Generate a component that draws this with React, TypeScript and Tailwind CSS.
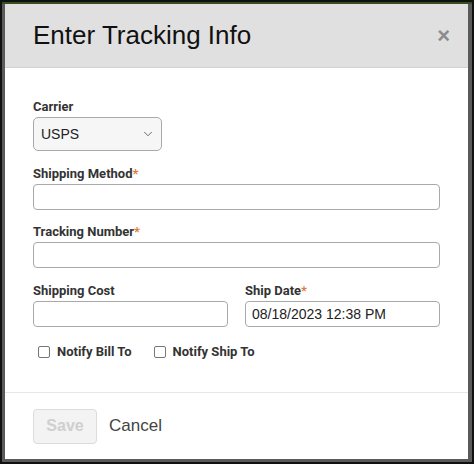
import { ChevronDown } from "lucide-react";

const label = "block text-[13px] font-bold text-[#333] leading-4 mb-[2px]";
const input =
  "block h-[26px] w-full rounded-[4px] border border-[#a9a9a9] bg-white px-[6px] text-[14px] text-[#222]";

function Req() {
  return <span className="text-[#e07b39]">*</span>;
}

export default function App() {
  return (
    <div className="h-[464px] w-[474px] bg-[#111] p-[2px] font-['Liberation_Sans',Arial,sans-serif]">
      <div className="flex h-full flex-col border-t-[2px] border-t-[#33501f] bg-[#5a5a5a] pb-[3px] pl-[3px] pr-[4px]">
        <div className="flex flex-1 flex-col bg-white">
          {/* Header */}
          <div className="flex h-[64px] items-center justify-between border-b border-[#d2d2d2] bg-[#e0e0e0] pl-[28px] pr-[18px]">
            <h1 className="text-[26px] font-normal text-[#111]">Enter Tracking Info</h1>
            <span className="text-[22px] font-bold leading-none text-[#8c8c8c]">×</span>
          </div>

          {/* Body */}
          <div className="flex flex-col px-[28px] pt-[31px] font-['Roboto',sans-serif]">
            <label className={label}>Carrier</label>
            <div className="flex h-[34px] w-[129px] items-center justify-between rounded-[5px] border border-[#a9a9a9] bg-[#f6f6f6] pl-[7px] pr-[6px]">
              <span className="font-['Liberation_Sans',Arial,sans-serif] text-[14px] text-[#222]">USPS</span>
              <ChevronDown className="h-[14px] w-[14px] text-[#555]" strokeWidth={1.5} />
            </div>

            <label className={`${label} mt-[15px]`}>
              Shipping Method<Req />
            </label>
            <div className={input} />

            <label className={`${label} mt-[14px]`}>
              Tracking Number<Req />
            </label>
            <div className={input} />

            <div className="mt-[15px] flex gap-[17px]">
              <div className="flex-1">
                <label className={label}>Shipping Cost</label>
                <div className={input} />
              </div>
              <div className="flex-1">
                <label className={label}>
                  Ship Date<Req />
                </label>
                <div className={`${input} flex items-center font-['Liberation_Sans',Arial,sans-serif]`}>
                  08/18/2023 12:38 PM
                </div>
              </div>
            </div>

            <div className="mt-[17px] flex h-4 items-center pl-[5px] text-[13px] font-bold text-[#333]">
              <span className="h-[12px] w-[12px] rounded-[2px] border border-[#777] bg-white" />
              <span className="ml-[7px]">Notify Bill To</span>
              <span className="ml-[22px] h-[12px] w-[12px] rounded-[2px] border border-[#777] bg-white" />
              <span className="ml-[7px]">Notify Ship To</span>
            </div>
          </div>

          {/* Footer */}
          <div className="mt-auto flex h-[67px] items-center gap-[12px] border-t border-[#e6e6e6] px-[28px]">
            <button
              disabled
              className="h-[35px] w-[64px] rounded-[4px] border border-[#dcdcdc] bg-[#f3f3f3] text-[16px] font-bold text-[#cfcfcf]"
            >
              Save
            </button>
            <span className="text-[17px] text-[#444]">Cancel</span>
          </div>
        </div>
      </div>
    </div>
  );
}
